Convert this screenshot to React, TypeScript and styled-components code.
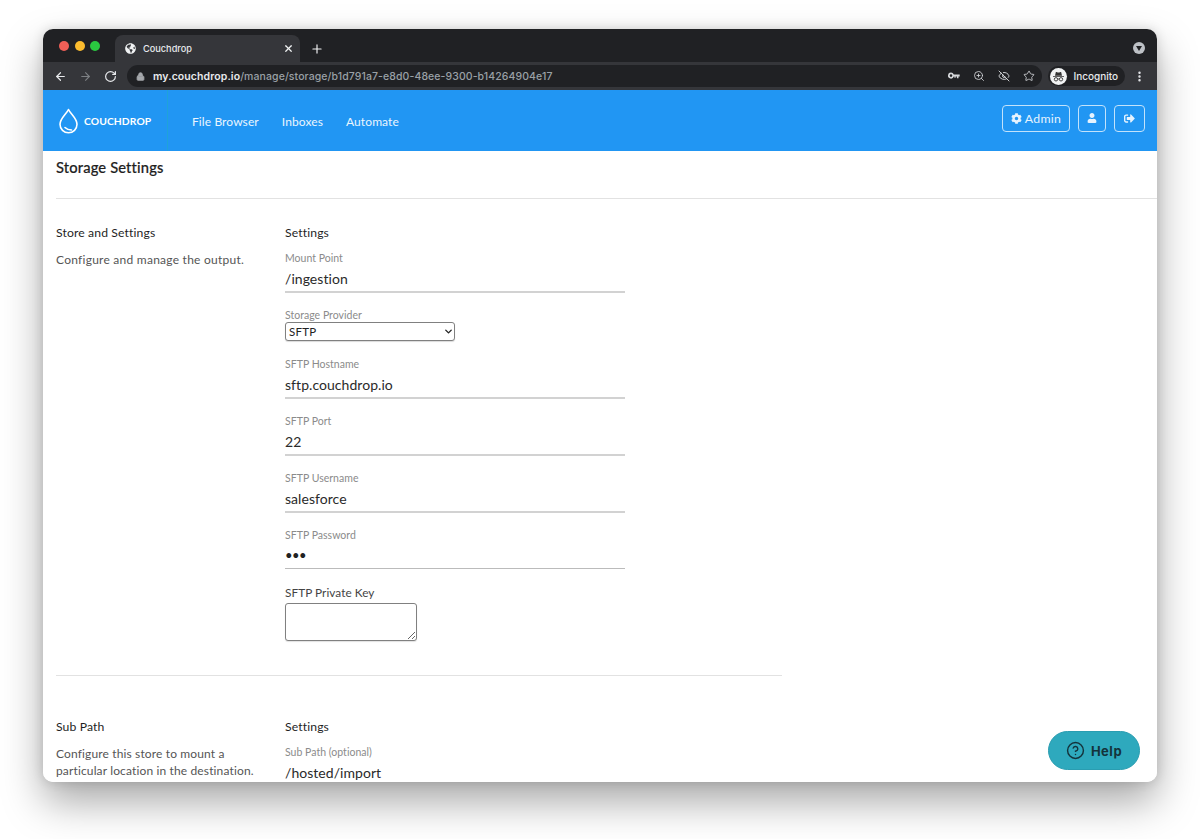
import React from "react";
import styled, { createGlobalStyle } from "styled-components";
import { ArrowLeft, ArrowRight, RotateCw, X, Plus, Lock, ZoomIn, EyeOff, Star, EllipsisVertical, CircleHelp, ChevronDown } from "lucide-react";
import { FaCog, FaUser, FaSignOutAlt, FaGlobeAmericas } from "react-icons/fa";

const Global = createGlobalStyle`
  html, body { margin: 0; padding: 0; background: #fff; }
  body { font-family: Lato, "Open Sans", sans-serif; }
`;
const Stage = styled.div`
  width: 1200px; height: 839px; box-sizing: border-box; padding: 29px 43px 57px; overflow: hidden; background: #fff;
`;
const Win = styled.div`
  position: relative; width: 1114px; height: 753px; border-radius: 10px; overflow: hidden; background: #fff;
  display: flex; flex-direction: column;
`;
const WinShadow = styled.div`
  border-radius: 10px; width: 1114px; height: 753px;
  box-shadow: 0 20px 40px rgba(0,0,0,.34), 0 0 12px rgba(0,0,0,.14);
`;
const TitleBar = styled.div`
  height: 33px; flex: none; background: #202124; display: flex; align-items: flex-end; padding-left: 16px; color: #fff;
`;
const Lights = styled.div`
  display: flex; gap: 5.5px; align-self: flex-start; margin-top: 12px; width: 56px;
`;
const Light = styled.span<{ $c: string }>`
  width: 10px; height: 10px; border-radius: 50%; background: ${p => p.$c};
`;
const Tab = styled.div`
  width: 185px; height: 27px; box-sizing: border-box; background: #35363a; border-radius: 8px 8px 0 0; display: flex; align-items: center;
  padding: 0 6px 0 10px; font: 500 9.2px Inter, sans-serif; color: #e8eaed; gap: 7px;
`;
const TabTitle = styled.span` flex: 1; `;
const NewTab = styled.div`
  width: 34px; display: flex; justify-content: center; align-self: center; margin-top: 6px;
`;
const TabSearch = styled.div`
  margin-left: auto; margin-right: 12px; align-self: center; margin-top: 5px; width: 12px; height: 12px; border-radius: 50%; background: #bdc1c6;
  display: flex; align-items: center; justify-content: center; &::after { content: ""; border: 3.5px solid transparent; border-top: 5px solid #202124; border-bottom: 0; }
`;
const ToolBar = styled.div`
  height: 28px; flex: none; background: #35363a; display: flex; align-items: center; padding-left: 11px; color: #e8eaed; box-sizing: border-box;
`;
const NavIcons = styled.div`
  display: flex; gap: 12px; width: 73px; align-items: center;
`;
const Omnibox = styled.div`
  width: 915px; height: 22px; background: #202124; border-radius: 11px; display: flex; align-items: center; padding: 0 7px 0 9px; box-sizing: border-box; gap: 8px;
`;
const Url = styled.div`
  flex: 1; font: 500 10.5px Inter, sans-serif; color: #9aa0a6; white-space: nowrap; letter-spacing: .09px;
  b { color: #e8eaed; font-weight: 600; }
`;
const OmniIcons = styled.div`
  display: flex; gap: 13px; align-items: center; color: #d5d7da;
`;
const Chip = styled.div`
  margin-left: 6px; width: 77px; height: 20px; border-radius: 10px; background: #202124; display: flex; align-items: center; gap: 6.5px; padding-left: 2px; box-sizing: border-box;
  font: 500 10px Inter, sans-serif; color: #e8eaed;
`;
const Avatar = styled.span`
  width: 17px; height: 17px; border-radius: 50%; background: #f1f3f4; display: flex; align-items: center; justify-content: center;
`;
const More = styled.div` margin-left: 8px; display: flex; `;
const Header = styled.header`
  height: 61px; flex: none; background: #2196f3; display: flex; align-items: stretch; color: #fff;
`;
const Brand = styled.div`
  width: 125px; box-sizing: border-box; padding: 1px 0 0 16px; border-right: 1px solid #1fa3d9; display: flex; align-items: center; gap: 6px;
  font: 700 10.3px Lato, sans-serif; letter-spacing: .1px;
`;
const Nav = styled.nav`
  display: flex; align-items: center; padding: 1px 0 0 24px; gap: 23px; font: 400 12px Lato, sans-serif; color: #eaf5fe; letter-spacing: .1px;
`;
const Actions = styled.div`
  margin-left: auto; padding: 0 12px 5px 0; display: flex; gap: 8px; align-items: center;
`;
const HeadBtn = styled.div<{ $w: number }>`
  width: ${p => p.$w}px; height: 27px; box-sizing: border-box; border: 1px solid #c2e2fb; border-radius: 4px; display: flex; align-items: center; justify-content: center; gap: 3px;
  font: 400 12.3px Lato, sans-serif; color: #e6f3fe; letter-spacing: .3px;
`;
const Main = styled.main`
  flex: 1; min-height: 0; overflow: hidden;
`;
const PageHead = styled.div`
  height: 48px; margin-left: 13px; box-sizing: border-box; border-bottom: 1px solid #e2e2e2; padding-top: 7px;
`;
const PageTitle = styled.h1`
  margin: 0; font: 500 14.7px/19px Lato, sans-serif; color: #1f1f1f; letter-spacing: .15px; -webkit-text-stroke: .2px #1f1f1f;
`;
const Section = styled.section<{ $top: number }>`
  display: grid; grid-template-columns: 229px 340px; padding: ${p => p.$top}px 0 0 13px;
`;
const SideTitle = styled.h2`
  margin: 0 0 8px; font: 400 12.2px/20px Lato, sans-serif; color: #1f1f1f; letter-spacing: .12px;
`;
const SideText = styled.p<{ $sp: number }>`
  margin: 0; width: 205px; font: 400 12px/17px Lato, sans-serif; color: #555; letter-spacing: ${p => p.$sp}px;
`;
const Label = styled.div`
  font: 400 10.5px/14px Lato, sans-serif; color: #8b8b8b; letter-spacing: .02px;
`;
const Value = styled.div`
  height: 26px; font: 400 14px/27px Lato, sans-serif; color: #2a2a2a; letter-spacing: .05px; box-sizing: border-box;
`;
const Dots = styled(Value)` font-size: 13px; line-height: 26px; letter-spacing: -.55px; color: #222; `;
const Field = styled.div`
  margin-bottom: 15px; border-bottom: 2px solid #d2d2d2;
  &:has(${Dots}) { border-bottom: 1px solid #bbb; }
`;
const SelectField = styled.div` margin-bottom: 16px; `;
const SelectWrap = styled.div`
  position: relative; width: 170px; height: 19px;
`;
const NativeSelect = styled.select`
  appearance: none; width: 100%; height: 100%; box-sizing: border-box; border: 1px solid #808080; border-radius: 3px; background: #fff; padding: 0 0 0 3px;
  font: 400 11.5px Lato, sans-serif; color: #222; letter-spacing: .2px; display: block; margin: 0;
  box-shadow: 0 1px 1px rgba(0,0,0,.15);
`;
const Chevron = styled.span`
  position: absolute; right: 1px; top: 4px; display: flex; color: #222; pointer-events: none;
`;
const KeyLabel = styled.div`
  height: 19px; font: 400 11.8px/17px Lato, sans-serif; color: #444; letter-spacing: .05px;
`;
const KeyArea = styled.textarea`
  display: block; width: 132px; height: 38px; box-sizing: border-box; margin: 0; border: 1px solid #808080; border-radius: 3px; background: #fff; padding: 2px; outline: none;
  box-shadow: 0 1px 1px rgba(0,0,0,.12);
`;
const Rule = styled.hr`
  margin: 34px 0 0 13px; width: 726px; height: 1px; border: 0; background: #e2e2e2;
`;
const HelpBtn = styled.div`
  position: absolute; left: 1005px; top: 702px; width: 92px; height: 39px; box-sizing: border-box; border-radius: 20px; background: #2ea9bd; border: 1px solid #2a9db1;
  display: flex; align-items: center; justify-content: center; gap: 6px; font: 700 13px Inter, sans-serif; color: #14333b; letter-spacing: .5px;
`;

const Drop = () => (
  <svg width="19" height="26" viewBox="0 0 19 26" fill="none" stroke="#fff" strokeWidth="1.6" strokeLinecap="round" strokeLinejoin="round">
    <path d="M9.500 1.500 C7.500 6 1 10.500 1 16.300 C1 21.200 4.800 24.800 9.500 24.800 C14.200 24.800 18 21.200 18 16.300 C18 10.500 11.500 6 9.500 1.500 Z" />
    <path d="M6 19.500 C7.800 21.300 9.800 22 12.500 22" />
  </svg>
);
const KeyIcon = () => (
  <svg width="12" height="8" viewBox="0 0 12 8" fill="#d5d7da">
    <path d="M3 .6a3 3 0 0 1 2.800 2h5.900v1.900h-1.200v1.800H8.900V4.500H7.700v1.200H6.400V4.500h-.6A3 3 0 1 1 3 .6Zm0 1.700a1.300 1.300 0 1 0 0 2.600 1.300 1.300 0 0 0 0-2.600Z" />
  </svg>
);
const Spy = () => (
  <svg width="13" height="13" viewBox="0 0 13 13" fill="none">
    <path d="M1 6h11v.8H1zM3 5.700l.8-3.500c.1-.5 1.500.3 2.700.3s2.600-.8 2.700-.3l.8 3.500z" fill="#333" />
    <circle cx="4" cy="9.300" r="1.700" stroke="#333" strokeWidth=".9" />
    <circle cx="9" cy="9.300" r="1.700" stroke="#333" strokeWidth=".9" />
    <path d="M5.700 9h1.600" stroke="#333" strokeWidth=".8" />
  </svg>
);

const fields = [
  { label: "SFTP Hostname", value: "sftp.couchdrop.io" },
  { label: "SFTP Port", value: "22" },
  { label: "SFTP Username", value: "salesforce" },
];

export default function App() {
  return (
    <Stage>
      <Global />
      <WinShadow>
        <Win>
          <TitleBar>
            <Lights>
              <Light $c="#f25f57" />
              <Light $c="#fbbc2e" />
              <Light $c="#2ac940" />
            </Lights>
            <Tab>
              <FaGlobeAmericas size={11} color="#f1f3f4" />
              <TabTitle>Couchdrop</TabTitle>
              <X size={11} strokeWidth={2.6} color="#f1f3f4" />
            </Tab>
            <NewTab><Plus size={14} strokeWidth={2} color="#f1f3f4" /></NewTab>
            <TabSearch />
          </TitleBar>
          <ToolBar>
            <NavIcons>
              <ArrowLeft size={13} strokeWidth={2.2} />
              <ArrowRight size={13} strokeWidth={2} color="#7d8084" />
              <RotateCw size={13} strokeWidth={2.2} />
            </NavIcons>
            <Omnibox>
              <Lock size={9} strokeWidth={2.4} color="#a5a8ac" fill="#a5a8ac" />
              <Url><b>my.couchdrop.io</b>/manage/storage/b1d791a7-e8d0-48ee-9300-b14264904e17</Url>
              <OmniIcons>
                <KeyIcon />
                <ZoomIn size={12} strokeWidth={1.7} />
                <EyeOff size={12} strokeWidth={1.9} />
                <Star size={12} strokeWidth={1.7} />
              </OmniIcons>
            </Omnibox>
            <Chip>
              <Avatar><Spy /></Avatar>
              Incognito
            </Chip>
            <More><EllipsisVertical size={13} strokeWidth={2.5} /></More>
          </ToolBar>
          <Header>
            <Brand>
              <Drop />
              COUCHDROP
            </Brand>
            <Nav>
              <span>File Browser</span>
              <span>Inboxes</span>
              <span>Automate</span>
            </Nav>
            <Actions>
              <HeadBtn $w={68}><FaCog size={11} />Admin</HeadBtn>
              <HeadBtn $w={28}><FaUser size={10} /></HeadBtn>
              <HeadBtn $w={31}><FaSignOutAlt size={11} /></HeadBtn>
            </Actions>
          </Header>
          <Main>
            <PageHead><PageTitle>Storage Settings</PageTitle></PageHead>
            <Section $top={24}>
              <div>
                <SideTitle>Store and Settings</SideTitle>
                <SideText $sp={0.25}>Configure and manage the output.</SideText>
              </div>
              <div>
                <SideTitle>Settings</SideTitle>
                <Field>
                  <Label>Mount Point</Label>
                  <Value>/ingestion</Value>
                </Field>
                <SelectField>
                  <Label>Storage Provider</Label>
                  <SelectWrap>
                    <NativeSelect defaultValue="SFTP">
                      <option>SFTP</option>
                    </NativeSelect>
                    <Chevron><ChevronDown size={11} strokeWidth={3} /></Chevron>
                  </SelectWrap>
                </SelectField>
                {fields.map(f => (
                  <Field key={f.label}>
                    <Label>{f.label}</Label>
                    <Value>{f.value}</Value>
                  </Field>
                ))}
                <Field>
                  <Label>SFTP Password</Label>
                  <Dots>•••</Dots>
                </Field>
                <KeyLabel>SFTP Private Key</KeyLabel>
                <KeyArea />
              </div>
            </Section>
            <Rule />
            <Section $top={41}>
              <div>
                <SideTitle>Sub Path</SideTitle>
                <SideText $sp={0.14}>Configure this store to mount a particular location in the destination.</SideText>
              </div>
              <div>
                <SideTitle>Settings</SideTitle>
                <Label>Sub Path (optional)</Label>
                <Value>/hosted/import</Value>
              </div>
            </Section>
          </Main>
          <HelpBtn><CircleHelp size={19} strokeWidth={1.8} />Help</HelpBtn>
        </Win>
      </WinShadow>
    </Stage>
  );
}
